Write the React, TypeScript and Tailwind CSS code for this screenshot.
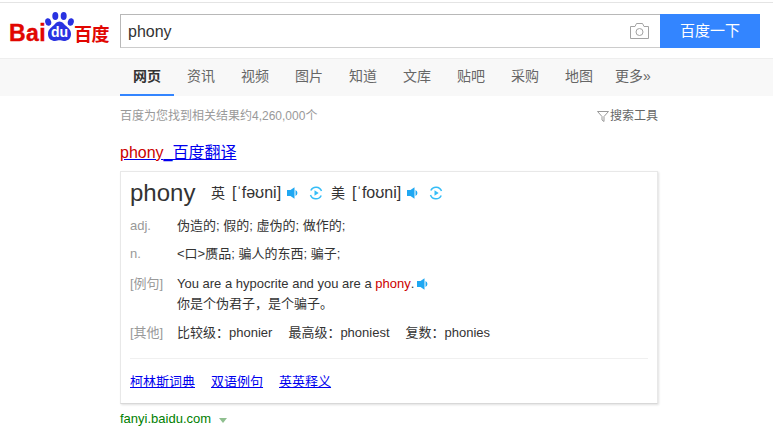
import React from "react";

const FONT = "font-['Liberation_Sans','Noto_Sans_CJK_SC',sans-serif]";

const tabs = ["网页", "资讯", "视频", "图片", "知道", "文库", "贴吧", "采购", "地图", "更多»"];

// small speaker glyph used next to the phonetics
function Speaker() {
  return (
    <svg width="12" height="12" viewBox="0 0 12 12" className="shrink-0">
      <path d="M0 3h3.500L7.500 .3v11.400L3.500 9H0z" fill="#1ea7f2" />
      <path d="M8.500 3a3.300 3.300 0 0 1 0 6z" fill="#1ea7f2" />
    </svg>
  );
}

// circled play glyph (slow playback)
function Replay() {
  return (
    <svg width="14" height="14" viewBox="0 0 14 14" className="shrink-0" fill="none">
      <path d="M1.800 4.500a5.800 5.800 0 0 1 10.700.5M12.200 9.500a5.800 5.800 0 0 1-10.700-.5" stroke="#35bdf7" strokeWidth="1.500" />
      <path d="M5.500 4.300L9.700 7l-4.200 2.700z" fill="#35bdf7" />
    </svg>
  );
}

function Logo() {
  return (
    <div className="flex items-end w-[120px] pl-[9px] pb-[7px] h-[34px] shrink-0 select-none">
      <span className="font-['Liberation_Sans'] font-bold text-[23px] leading-[16px] text-[#e10601] tracking-[0.4px] [-webkit-text-stroke:0.4px_#e10601]">Bai</span>
      <div className="relative w-[29px] h-[29px] -ml-[1px] shrink-0">
        <svg width="29" height="29" viewBox="0 0 29 29" className="absolute inset-0">
          <g fill="#2932e1">
            <ellipse cx="3.200" cy="10" rx="3" ry="3.800" transform="rotate(-15 3.200 10)" />
            <ellipse cx="10.300" cy="4" rx="3" ry="3.900" />
            <ellipse cx="18.700" cy="4" rx="3" ry="3.900" />
            <ellipse cx="25.800" cy="10" rx="3" ry="3.800" transform="rotate(15 25.800 10)" />
            <path d="M14.500 9.500c3 0 4.200 2.300 6 4 2.500 2.300 5.500 4 5.500 8.500 0 5-3.700 7-7 7-2 0-3-.7-4.500-.7s-2.500.7-4.500.7c-3.300 0-7-2-7-7 0-4.500 3-6.200 5.500-8.500 1.800-1.700 3-4 6-4z" />
          </g>
        </svg>
        <span className="absolute left-[6px] top-[13px] font-['Liberation_Sans'] font-bold text-[14px] leading-[14px] text-white">du</span>
      </div>
      <span className="font-['Noto_Sans_CJK_SC'] font-bold text-[18px] leading-[16px] text-[#e10601] tracking-[-0.5px]">百度</span>
    </div>
  );
}

function Header() {
  return (
    <div className="h-[59px] pt-[2px] bg-white border-b border-[#eeeeee]">
      <div className="h-[1px] bg-[#e4e4e4]" />
      <div className="flex items-center h-[34px] mt-[11px]">
        <Logo />
        <div className="flex items-center w-[540px] h-[34px] border border-[#b8b8b8] border-r-0 border-b-[#cccccc] pl-[7px] pr-[11px]">
          <span className="text-[16px] text-[#333333] flex-1 pt-[1px]">phony</span>
          <svg width="19" height="16" viewBox="0 0 19 16" fill="none" stroke="#a3a3a3" strokeWidth="1">
            <path d="M.5 3.500h4.500l1.500-3h6l1.500 3h4.500v12h-18z" />
            <circle cx="9.500" cy="9" r="3.500" />
          </svg>
        </div>
        <div className="w-[100px] h-[34px] bg-[#3385ff] text-white text-[15px] flex items-center justify-center">百度一下</div>
      </div>
    </div>
  );
}

function Nav() {
  return (
    <div className="h-[37px] bg-[#f8f8f8] pl-[120px] flex">
      {tabs.map((tab, i) => (
        <div
          key={tab}
          className={
            i === 0
              ? "w-[54px] text-center text-[14px] font-bold text-[#333333] leading-[35px] border-b-2 border-[#3385ff]"
              : "w-[54px] text-center text-[14px] text-[#666666] leading-[35px] whitespace-nowrap"
          }
        >
          {tab}
        </div>
      ))}
    </div>
  );
}

function Row({ label, children, className }: { label: string; children: React.ReactNode; className?: string }) {
  return (
    <div className={`flex text-[13px] leading-[18px] ${className ?? ""}`}>
      <div className="w-[47px] shrink-0 text-[#999999]">{label}</div>
      <div className="text-[#333333]">{children}</div>
    </div>
  );
}

function Card() {
  return (
    <div className="w-[538px] h-[233px] mt-[8px] border border-[#e8e8e8] border-b-[#d8d8d8] shadow-[1px_1px_2px_rgba(0,0,0,0.12)] px-[9px] pt-[7px]">
      <div className="flex items-center h-[28px] text-[#333333]">
        <span className="text-[24px] leading-[28px] w-[81px]">phony</span>
        <span className="text-[14px]">英</span>
        <span className="text-[16px] ml-[7px] mr-[6px]">[ˈfəʊni]</span>
        <Speaker />
        <span className="w-[10px]" />
        <Replay />
        <span className="text-[14px] ml-[8px]">美</span>
        <span className="text-[16px] ml-[7px] mr-[6px]">[ˈfoʊni]</span>
        <Speaker />
        <span className="w-[10px]" />
        <Replay />
      </div>
      <Row label="adj." className="mt-[10px]">伪造的; 假的; 虚伪的; 做作的;</Row>
      <Row label="n." className="mt-[10px]">&lt;口&gt;赝品; 骗人的东西; 骗子;</Row>
      <Row label="[例句]" className="mt-[12px]">
        <div className="flex items-center">
          You are a hypocrite and you are a&nbsp;<span className="text-[#cc0000]">phony</span>.
          <span className="ml-[3px]"><Speaker /></span>
        </div>
        <div className="mt-[2px]">你是个伪君子，是个骗子。</div>
      </Row>
      <Row label="[其他]" className="mt-[11px]">
        <div className="flex gap-[16px]">
          <span>比较级：phonier</span>
          <span>最高级：phoniest</span>
          <span>复数：phonies</span>
        </div>
      </Row>
      <div className="h-[1px] bg-[#f0f0f0] mt-[16px]" />
      <div className="flex gap-[16px] mt-[14px] text-[13px] leading-[18px] text-[#0000ee] underline">
        <span>柯林斯词典</span>
        <span>双语例句</span>
        <span>英英释义</span>
      </div>
    </div>
  );
}

export default function App() {
  return (
    <div className={`w-[773px] h-[433px] overflow-hidden bg-white ${FONT}`}>
      <Header />
      <Nav />
      <div className="pl-[120px] w-[658px]">
        <div className="flex justify-between items-center h-[20px] mt-[10px] text-[12px]">
          <span className="text-[#999999]">百度为您找到相关结果约4,260,000个</span>
          <span className="flex items-center text-[#666666]">
            <svg width="12" height="12" viewBox="0 0 12 12" fill="none" stroke="#999999" className="mr-[1px]">
              <path d="M.5 1.500h11L7 6.500v5l-2-1.500v-3.500z" />
            </svg>
            搜索工具
          </span>
        </div>
        <div className="mt-[17px] text-[16px] leading-[20px] text-[#0000ee] underline">
          <span className="text-[#cc0000]">phony</span>_百度翻译
        </div>
        <Card />
        <div className="flex items-center mt-[6px] text-[13px] leading-[18px] text-[#008000]">
          fanyi.baidu.com
          <span className="ml-[8px] mt-[2px] w-0 h-0 border-x-[4px] border-x-transparent border-t-[5px] border-t-[#8fbf8f]" />
        </div>
      </div>
    </div>
  );
}
